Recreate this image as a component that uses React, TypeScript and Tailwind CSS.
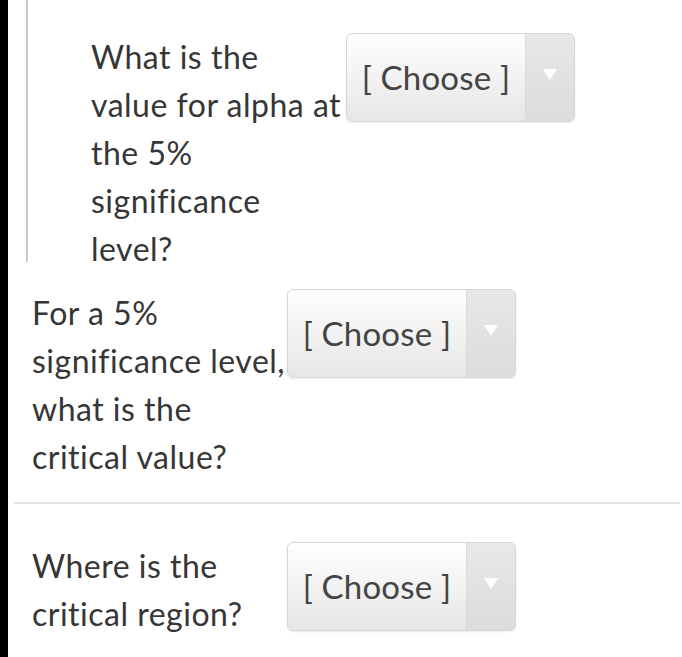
import { ReactNode } from 'react';

function ChooseSelect() {
  return (
    <div className="w-[229px] h-[89px] shrink-0 flex rounded-[6px] border border-[#d6d6d6] bg-gradient-to-b from-[#ffffff] to-[#e6e6e6] shadow-[0_1px_2px_rgba(0,0,0,0.08)] overflow-hidden">
      <div className="flex-1 flex items-center justify-center text-[33px] tracking-[0.2px] text-[#444]">
        [ Choose ]
      </div>
      <div className="w-[49px] flex justify-center pt-[34px] bg-gradient-to-b from-[#e8e8e8] to-[#dcdcdc] border-l border-[#dadada]">
        <svg width="16" height="13" viewBox="0 0 16 13">
          <polygon points="1,1 15,1 8,12" fill="#ffffff" />
        </svg>
      </div>
    </div>
  );
}

function Question({ lines }: { lines: string[] }) {
  return (
    <div className="w-[255px] shrink-0 whitespace-nowrap text-[32px] tracking-[0.5px] leading-[48px] text-[#363636]">
      {lines.map((l, i) => (
        <div key={i}>{l}</div>
      ))}
    </div>
  );
}

export default function App() {
  return (
    <div className="min-h-[657px] bg-white flex" style={{ fontFamily: 'Lato, "Open Sans", sans-serif' }}>
      <div className="w-[8px] shrink-0 bg-black" />
      <div className="flex-1 flex flex-col">
        {/* first answer group, indented with a rule on its left */}
        <div className="ml-[18px] h-[262px] border-l-2 border-[#c8c8c8] pl-[63px] pt-[33px] flex items-start">
          <Question lines={['What is the', 'value for alpha at', 'the 5%', 'significance', 'level?']} />
          <ChooseSelect />
        </div>

        <div className="pl-[24px] pt-[27px] flex items-start">
          <Question lines={['For a 5%', 'significance level,', 'what is the', 'critical value?']} />
          <ChooseSelect />
        </div>

        <div className="mt-[21px] ml-[6px] mr-[2px] h-[2px] bg-[#e2e2e2]" />

        <div className="pl-[24px] pt-[38px] flex items-start">
          <Question lines={['Where is the', 'critical region?']} />
          <ChooseSelect />
        </div>
      </div>
    </div>
  );
}
